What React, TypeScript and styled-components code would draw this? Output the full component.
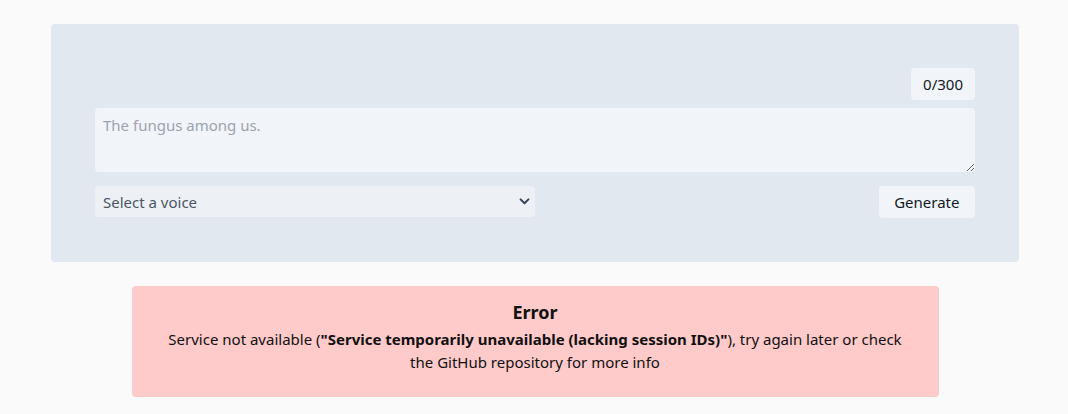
import React from "react";
import styled, { createGlobalStyle } from "styled-components";

const Global = createGlobalStyle`
  html, body { margin: 0; padding: 0; background: #fafafa; }
  body { font-family: "Noto Sans", "Open Sans", sans-serif; color: #0f172a; }
  * { box-sizing: border-box; }
`;

const Page = styled.main`
  display: flex;
  flex-direction: column;
  align-items: center;
  padding: 24px 49px 0 51px;
  gap: 24px;
`;

const Panel = styled.section`
  width: 100%;
  background: #e2e8f0;
  border-radius: 4px;
  padding: 44px;
  display: flex;
  flex-direction: column;
  gap: 8px;
`;

const TopRow = styled.div`
  display: flex;
  justify-content: flex-end;
`;

const Counter = styled.span`
  background: #f1f5f9;
  border-radius: 4px;
  height: 32px;
  padding: 0 12px;
  display: flex;
  align-items: center;
  font-size: 15px;
  color: #111827;
`;

const TextArea = styled.textarea`
  display: block;
  width: 100%;
  height: 64px;
  border: none;
  outline: none;
  border-radius: 4px;
  background: #f1f5f9;
  padding: 7px 8px;
  font-family: inherit;
  font-size: 15px;
  color: #111827;
  resize: vertical;
  &::placeholder { color: #9ca3af; }
`;

const BottomRow = styled.div`
  display: flex;
  justify-content: space-between;
  align-items: flex-start;
  margin-top: 6px;
`;

const Select = styled.select`
  appearance: none;
  width: 440px;
  height: 31px;
  border: none;
  outline: none;
  border-radius: 4px;
  background-color: #edf1f6;
  background-image: url("data:image/svg+xml;utf8,<svg xmlns='http://www.w3.org/2000/svg' width='12' height='8' viewBox='0 0 12 8'><path d='M1.5 1.5 L6 6 L10.5 1.5' fill='none' stroke='%23374151' stroke-width='2.2' stroke-linecap='round' stroke-linejoin='round'/></svg>");
  background-repeat: no-repeat;
  background-position: right 5px center;
  background-size: 11px 7px;
  padding: 0 8px;
  font-family: inherit;
  font-size: 15px;
  color: #4b5563;
`;

const Button = styled.button`
  height: 32px;
  padding: 0 15.5px;
  border: none;
  border-radius: 4px;
  background: #f1f5f9;
  font-family: inherit;
  font-size: 15px;
  color: #111827;
  cursor: pointer;
`;

const ErrorBox = styled.div`
  width: 807px;
  background: #fecaca;
  border-radius: 4px;
  padding: 14px 32px 23px;
  text-align: center;
  color: #111;
  font-size: 15px;
  line-height: 23px;
`;

const ErrorTitle = styled.h2`
  margin: 0 0 4px;
  font-size: 18px;
  font-weight: 700;
  line-height: 24px;
`;

const ErrorText = styled.p`
  margin: 0;
`;

export default function App() {
  return (
    <>
      <Global />
      <Page>
        <Panel>
          <TopRow>
            <Counter>0/300</Counter>
          </TopRow>
          <TextArea placeholder="The fungus among us." />
          <BottomRow>
            <Select defaultValue="">
              <option value="" disabled>
                Select a voice
              </option>
            </Select>
            <Button>Generate</Button>
          </BottomRow>
        </Panel>
        <ErrorBox>
          <ErrorTitle>Error</ErrorTitle>
          <ErrorText>
            Service not available (<b>"Service temporarily unavailable (lacking session IDs)"</b>), try again later or check the GitHub repository for more info
          </ErrorText>
        </ErrorBox>
      </Page>
    </>
  );
}
